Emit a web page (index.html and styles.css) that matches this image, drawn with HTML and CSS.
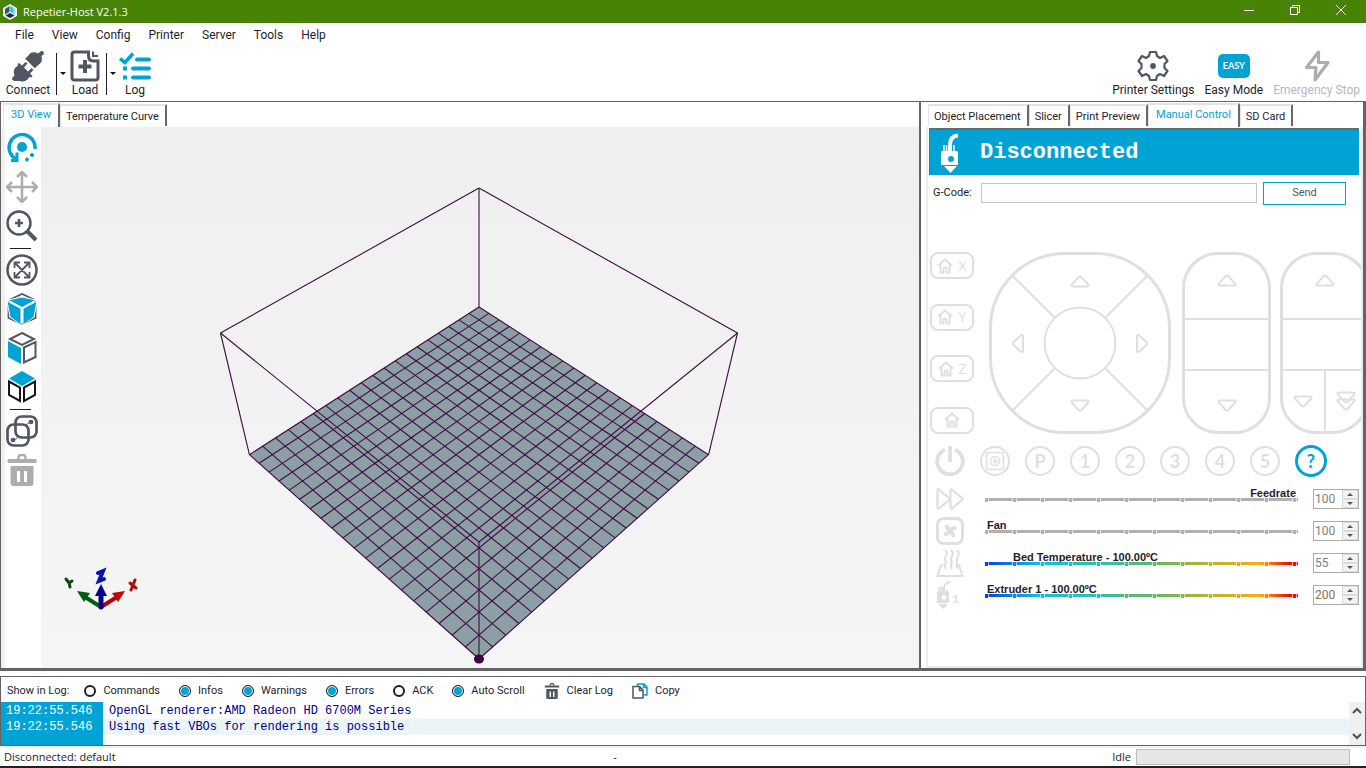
FILE: index.html
```html
<!DOCTYPE html>
<html lang="en">
<head>
  <meta charset="UTF-8" />
  <meta name="viewport" content="width=device-width, initial-scale=1.0" />
  <title>Repetier-Host V2.1.3</title>
  <link rel="stylesheet" href="styles.css">
</head>
<body>
  <!-- shared icons -->
  <svg class="defs" aria-hidden="true">
    <symbol id="home" viewBox="0 0 16 16"><path d="M1 7.500 8 1.500l7 6M3.500 6.500v8H6.500V11c0-2 3-2 3 0v3.500h3v-8" /></symbol>
    <symbol id="tri" viewBox="0 0 20 13"><path d="M8.500 2.200 1.800 9.500Q.8 11.500 2.800 11.500H17.200Q19.200 11.500 18.200 9.500L11.500 2.200Q10 .8 8.500 2.200z" /></symbol>
    <symbol id="trash" viewBox="0 0 32 32"><path d="M2.500 5h27q1 0 1 1v2q0 1-1 1h-27q-1 0-1-1V6q0-1 1-1zM4.500 12h23v17q0 3-3 3h-17q-3 0-3-3zM11 17v11h3V17zM18 17v11h3V17z" fill="currentColor" fill-rule="evenodd" /><path d="M12.500 5q0-4 2-4h3q2 0 2 4" fill="none" stroke="currentColor" stroke-width="2.500" /></symbol>
  </svg>

  <header class="titlebar">
    <svg class="app-logo" viewBox="0 0 16 16"><path d="M8 0l7 4v8l-7 4-7-4V4z" fill="#e9f1f4" /><path d="M7.500 2v6L3 10.500V5z" fill="#3a5964" /><path d="M8.500 2L13 5v5.500L8.500 8z" fill="#7fd3ea" /><path d="M8.500 2l2 1.500v5l-2-.5z" fill="#13b4df" /><path d="M8 9l4.500 2.500L8 14l-4.500-2.500z" fill="#1f2b38" /></svg>
    <h1>Repetier-Host V2.1.3</h1>
    <div class="window-buttons">
      <button aria-label="Minimize"><svg viewBox="0 0 12 12"><path d="M1 6.500h10" /></svg></button>
      <button aria-label="Restore"><svg viewBox="0 0 12 12"><path d="M1.500 3.500h7v7h-7zM3.500 3V1.500h7v7H9" /></svg></button>
      <button aria-label="Close"><svg viewBox="0 0 12 12"><path d="M1 1l10 10M11 1L1 11" /></svg></button>
    </div>
  </header>

  <nav class="menu">
    <a href="#">File</a>
    <a href="#">View</a>
    <a href="#">Config</a>
    <a href="#">Printer</a>
    <a href="#">Server</a>
    <a href="#">Tools</a>
    <a href="#">Help</a>
  </nav>

  <div class="toolbar">
    <button class="tool connect">
      <svg viewBox="0 0 32 32" fill="#515663"><path d="M29 1l2.500.5.5 2.500-2.500 2q1.500 5-2 8l-3 2.500-1.500 2-10-10 2-1.500 3-3.500q3.500-2.500 8 0z" /><path d="M2 31l-2-1.500.5-2 2-2q-2-5 1-8l2.500-2-.5-1.500 1.500-1 3 2.500 3.500-3.500 2 1.500-3.500 4 4 4 3.500-3.500 2 2-3.500 3.500 2.500 2.500-1 1.500-2-.5-2 2.500q-3 3-8 1.500z" /></svg>
      <span>Connect</span>
    </button>
    <i class="divider"></i>
    <button class="arrow" aria-label="Connect options"></button>
    <button class="tool load">
      <svg viewBox="0 0 32 32" fill="none" stroke="#515663" stroke-width="3"><path d="M19.500 2H5.500q-2.500 0-2.500 2.500v23Q3 30 5.500 30h21q2.500 0 2.500-2.500V11h-4.500q-5 0-5-5z" /><path d="M24 1.500V6h5" stroke-width="2" /><path d="M16 10v13M9.500 16.500h13" stroke-width="4" /></svg>
      <span>Load</span>
    </button>
    <i class="divider"></i>
    <button class="arrow" aria-label="Load options"></button>
    <button class="tool log">
      <svg viewBox="0 0 32 32" fill="none" stroke="#00a3d3" stroke-width="4"><path d="M1 8.500l5 4 8-9" stroke-width="3.500" /><path d="M18 9.500h12M14 18.500h16M14 27.500h16" stroke-linecap="round" /><path d="M4 18.500h4M4 27.500h4" /></svg>
      <span>Log</span>
    </button>
    <div class="toolbar-right">
      <button class="tool">
        <svg viewBox="0 0 32 32" fill="none" stroke="#515663" stroke-width="2.200" stroke-linejoin="round"><path d="M13 2h6l1 4 3 2 4-2 3.500 5-3 3v4l3 3-3.500 5-4-2-3 2-1 4h-6l-1-4-3-2-4 2-3.500-5 3-3v-4l-3-3L5 6l4 2 3-2z" /><circle cx="16" cy="16" r="1.800" fill="#515663" /></svg>
        <span>Printer Settings</span>
      </button>
      <button class="tool">
        <b class="easy">EASY</b>
        <span>Easy Mode</span>
      </button>
      <button class="tool" disabled>
        <svg viewBox="0 0 32 32" fill="none" stroke="#adadad" stroke-width="3.200" stroke-linejoin="round"><path d="M17.500 2L5.500 17.500H15L14 30 27 12.500H17.500z" /></svg>
        <span>Emergency Stop</span>
      </button>
    </div>
  </div>

  <main class="work">
    <section class="panel view-panel">
      <div class="tabs">
        <button class="tab active">3D View</button>
        <button class="tab">Temperature Curve</button>
      </div>
      <div class="view">
        <div class="view-tools">
          <button aria-label="Rotate"><svg viewBox="0 0 32 32" fill="none" stroke="#00a3d3" stroke-width="3.500"><path d="M10 27A13 13 0 1 1 29 17" /><circle cx="16" cy="15" r="5" fill="#00a3d3" stroke="none" /><path d="M5 28.500h6v-8" stroke-width="3" /><path d="M26 21v4M24 23h4M21 25.500v4M19 27.500h4" stroke-width="2" /></svg></button>
          <button aria-label="Move"><svg viewBox="0 0 32 32" fill="none" stroke="#adadad" stroke-width="2.500"><path d="M16 1v30M1 16h30M11 6l5-5 5 5M11 26l5 5 5-5M6 11l-5 5 5 5M26 11l5 5-5 5" /></svg></button>
          <button aria-label="Zoom"><svg viewBox="0 0 32 32" fill="none" stroke="#515663" stroke-width="2.500"><circle cx="13" cy="13" r="11.500" /><path d="M13 9v8M9 13h8" stroke-width="2.700" /><path d="M21.500 21.500l8.500 8.500" stroke-width="4" /></svg></button>
          <hr>
          <button aria-label="Fit printer"><svg viewBox="0 0 32 32" fill="none" stroke="#515663" stroke-width="2.500"><circle cx="16" cy="16" r="14.500" /><path d="M9 9l14 14M23 9L9 23M8.500 14V8.500H14M18 8.500h5.500V14M8.500 18v5.500H14M18 23.500h5.500V18" stroke-width="1.800" /></svg></button>
          <button aria-label="Isometric view"><svg viewBox="0 0 32 32"><path d="M3 7l13-6 13 6M2.500 8v17L16 31l13.500-6V8" fill="none" stroke="#515663" stroke-width="1.800" /><path d="M1 8l14 7.500V32L4 24zM31 8l-14 7.500V32l11-8z" fill="#00a3d3" stroke="#fff" /><path d="M2 7l14-3 14 3-14 7.500z" fill="#00a3d3" stroke="#fff" /></svg></button>
          <button aria-label="Front view"><svg viewBox="0 0 32 32"><path d="M16 1l12 6-12 6-12-6zM29.500 10v15L18 30.500v-15z" fill="none" stroke="#515663" stroke-width="2" /><path d="M2 9l13 7v16L2 25z" fill="#00a3d3" /></svg></button>
          <button aria-label="Top view"><svg viewBox="0 0 32 32"><path d="M16 0l13 7.500L16 15 3 7.500z" fill="#00a3d3" /><path d="M3 10.500l11 6V30L3 24zM29 10.500l-11 6V30l11-6z" fill="none" stroke="#151515" stroke-width="2" /></svg></button>
          <hr>
          <button aria-label="Parallel projection"><svg viewBox="0 0 32 32" fill="none" stroke="#515663" stroke-width="2.700"><rect x="9.500" y="1.500" width="21" height="21" rx="6" /><rect x="1.500" y="9.500" width="21" height="21" rx="6" /><path d="M20 10l5-4M6 27l5-4" stroke-width="1" /><circle cx="25" cy="7" r="1" /><circle cx="7" cy="25" r="1" /></svg></button>
          <button class="muted" aria-label="Delete"><svg><use href="#trash" /></svg></button>
        </div>
        <svg class="scene" viewBox="0 0 878 541">
          <g id="bed"></g>
          <g class="axes" stroke-linecap="round">
            <path d="M60 480L44 470" stroke="#075b12" stroke-width="4" /><path d="M36 464l13 2-6 9z" fill="#075b12" />
            <path d="M60 480l16-10" stroke="#b30008" stroke-width="4" /><path d="M84 464l-13 2 6 9z" fill="#c90000" />
            <path d="M60 480v-14" stroke="#04048c" stroke-width="5" /><path d="M60 457l-6 12h12z" fill="#04048c" />
            <path d="M25 452l3 4 3-2M28 455l1 5" stroke="#064b0c" stroke-width="3" fill="none" />
            <path d="M57 446l5-2-4 10 5-2" stroke="#0713b5" stroke-width="4" fill="none" />
            <path d="M94 453l-4 10M89 456l6 5" stroke="#b40c0c" stroke-width="3" fill="none" />
          </g>
        </svg>
      </div>
    </section>

    <section class="panel control-panel">
      <div class="tabs">
        <button class="tab">Object Placement</button>
        <button class="tab">Slicer</button>
        <button class="tab">Print Preview</button>
        <button class="tab active">Manual Control</button>
        <button class="tab">SD Card</button>
      </div>
      <div class="control">
        <div class="state">
          <svg viewBox="0 0 20 40"><path d="M10 18V12Q10 3 18 2.500" stroke="#fff" stroke-width="4" fill="none" /><path d="M4 12v6M6.500 12v6M14 12v6" stroke="#fff" stroke-width="1.500" /><path d="M2 18h15l1 1v13H1V19z" fill="#fff" /><path d="M4 33h13l-6.500 7z" fill="#fff" /><circle cx="11" cy="26" r="3" fill="#00a3d3" /></svg>
          <strong>Disconnected</strong>
        </div>

        <form class="gcode">
          <label for="gcode">G-Code:</label>
          <input type="text" id="gcode" />
          <button type="button">Send</button>
        </form>

        <div class="motion">
          <div class="homes">
            <button><svg><use href="#home" /></svg>X</button>
            <button><svg><use href="#home" /></svg>Y</button>
            <button><svg><use href="#home" /></svg>Z</button>
            <button aria-label="Home all"><svg><use href="#home" /></svg></button>
          </div>
          <div class="pad xy">
            <svg class="xy-lines" viewBox="0 0 182 182"><circle cx="91" cy="91" r="35.500" /><path d="M23 23l43 43M159 23l-43 43M23 159l43-43M159 159l-43-43" /></svg>
            <button class="n" aria-label="Y+"><svg><use href="#tri" /></svg></button>
            <button class="w" aria-label="X-"><svg><use href="#tri" /></svg></button>
            <button class="e" aria-label="X+"><svg><use href="#tri" /></svg></button>
            <button class="s" aria-label="Y-"><svg><use href="#tri" /></svg></button>
          </div>
          <div class="pad column">
            <button aria-label="Z+"><svg><use href="#tri" /></svg></button>
            <div class="middle"></div>
            <button class="s" aria-label="Z-"><svg><use href="#tri" /></svg></button>
          </div>
          <div class="pad column extruder">
            <button aria-label="Retract"><svg><use href="#tri" /></svg></button>
            <div class="middle"></div>
            <div class="pair">
              <button class="s" aria-label="Extrude"><svg><use href="#tri" /></svg></button>
              <button class="s double" aria-label="Extrude fast"><svg><use href="#tri" /></svg><svg><use href="#tri" /></svg></button>
            </div>
          </div>
        </div>

        <div class="rounds">
          <button class="power" aria-label="Power"><svg viewBox="0 0 32 32" fill="none" stroke="#dfdfdf" stroke-width="4"><path d="M10.500 4A13.700 13.700 0 1 0 21.500 4M16 0v17" /></svg></button>
          <button aria-label="Motor off"><svg viewBox="0 0 20 20" fill="none" stroke="#dfdfdf" stroke-width="1.500"><rect x="1.500" y="1.500" width="17" height="17" rx="2" /><circle cx="10" cy="10" r="4.500" /><circle cx="10" cy="10" r="1.500" /></svg></button>
          <button>P</button>
          <button>1</button>
          <button>2</button>
          <button>3</button>
          <button>4</button>
          <button>5</button>
          <button class="help">?</button>
        </div>

        <div class="sliders">
          <div class="slider-row">
            <svg viewBox="0 0 28 28" fill="none" stroke="#dfdfdf" stroke-width="2.200" stroke-linejoin="round"><path d="M1.500 5.500v17q0 2 2 .5L13 15q1.500-1 0-2L3.500 5q-2-1.500-2 .5zM14.500 5.500v17q0 2 2 .5L26 15q1.500-1 0-2l-9.500-8q-2-1.500-2 .5z" /></svg>
            <div class="slider"><label class="end" for="feed">Feedrate</label><input type="range" id="feed" /></div>
            <div class="spin"><input type="number" value="100" aria-label="Feedrate value" /><div><button aria-label="Up"></button><button class="down" aria-label="Down"></button></div></div>
          </div>
          <div class="slider-row">
            <svg viewBox="0 0 28 28" fill="none" stroke="#dfdfdf"><rect x="1.500" y="1.500" width="25" height="25" rx="6" stroke-width="3" /><path d="M11 9.500q0 3 3 4.500M18.500 11q-3 0-4.500 3M17 18.500q0-3-3-4.500M9.500 17q3 0 4.500-3" stroke-width="4" stroke-linecap="round" /></svg>
            <div class="slider"><label for="fan">Fan</label><input type="range" id="fan" /></div>
            <div class="spin"><input type="number" value="100" aria-label="Fan value" /><div><button aria-label="Up"></button><button class="down" aria-label="Down"></button></div></div>
          </div>
          <div class="slider-row">
            <svg viewBox="0 0 28 28" fill="none" stroke="#dfdfdf" stroke-width="2"><path d="M7 16H5L1.500 27h25L23 16h-2M9 1q3 3 1 6t0 6q-2 3 0 7M15 1q3 3 1 6t0 6q-2 3 0 7M21 1q3 3 1 6t-1 6q-1 3 1 7" /></svg>
            <div class="slider heat"><label class="indent" for="bed-temp">Bed Temperature - 100.00ºC</label><input type="range" id="bed-temp" /></div>
            <div class="spin"><input type="number" value="55" aria-label="Bed temperature value" /><div><button aria-label="Up"></button><button class="down" aria-label="Down"></button></div></div>
          </div>
          <div class="slider-row">
            <svg viewBox="0 0 28 28"><path d="M8 11V8q0-6 6-7M3.500 6v6M6 6v6M11 9v3" stroke="#dfdfdf" stroke-width="2" fill="none" /><path d="M1 11h12v11H1zM2 23h10l-5 5z" fill="#dfdfdf" /><circle cx="8" cy="16.500" r="2.300" fill="#fff" /><text x="16" y="22">1</text></svg>
            <div class="slider heat"><label for="ext">Extruder 1 - 100.00ºC</label><input type="range" id="ext" /></div>
            <div class="spin warm"><input type="number" value="200" aria-label="Extruder value" /><div><button aria-label="Up"></button><button class="down" aria-label="Down"></button></div></div>
          </div>
        </div>
      </div>
    </section>
  </main>

  <section class="log-panel">
    <div class="filters">
      <span class="caption">Show in Log:</span>
      <label><input type="checkbox" />Commands</label>
      <label><input type="checkbox" checked />Infos</label>
      <label><input type="checkbox" checked />Warnings</label>
      <label><input type="checkbox" checked />Errors</label>
      <label><input type="checkbox" />ACK</label>
      <label><input type="checkbox" checked />Auto Scroll</label>
      <button><svg><use href="#trash" /></svg>Clear Log</button>
      <button><svg viewBox="0 0 16 16" fill="none" stroke-width="1.500"><path d="M5.500 3V1H12l3 3v8h-3M11.500 1v3.500H15" stroke="#00a3d3" /><path d="M1 3.500h6.500L11 7v8H1zM7.500 4v3.500H11" stroke="#515663" /></svg>Copy</button>
    </div>
    <div class="log-body">
      <ul class="lines">
        <li><time>19:22:55.546</time><span>OpenGL renderer:AMD Radeon HD 6700M Series</span></li>
        <li><time>19:22:55.546</time><span>Using fast VBOs for rendering is possible</span></li>
      </ul>
      <div class="scroll">
        <button aria-label="Scroll up"><svg viewBox="0 0 10 8"><path d="M1 6l4-4 4 4" /></svg></button>
        <button aria-label="Scroll down"><svg viewBox="0 0 10 8"><path d="M1 2l4 4 4-4" /></svg></button>
      </div>
    </div>
  </section>

  <footer class="status">
    <span class="left">Disconnected: default</span>
    <span class="mid">-</span>
    <span class="right">Idle</span>
    <div class="progress"></div>
  </footer>

  <script src="script.js"></script>
</body>
</html>
```
FILE: styles.css
```css
* {
  box-sizing: border-box;
}
body {
  margin: 0;
  height: 100vh;
  display: flex;
  flex-direction: column;
  background: #fff;
  color: #1e1e28;
  font: 12px/16px Roboto, sans-serif;
  overflow: hidden;
}
button {
  border: 0;
  padding: 0;
  background: none;
  color: inherit;
  font: inherit;
}
svg {
  display: block;
}
.defs {
  position: absolute;
  width: 0;
  height: 0;
}

/* title bar and menu */
.titlebar {
  display: flex;
  align-items: center;
  height: 23px;
  padding: 0 2px;
  background: #488305;
  color: #fff;
}
.app-logo {
  width: 16px;
  height: 16px;
}
.titlebar h1 {
  flex: 1;
  margin: 0 0 0 5px;
  font: 11px/16px "Open Sans", sans-serif;
}
.window-buttons {
  display: flex;
  align-self: flex-start;
  height: 20px;
}
.window-buttons button {
  width: 46px;
  display: flex;
  align-items: center;
  justify-content: center;
}
.window-buttons svg {
  width: 12px;
  height: 12px;
  fill: none;
  stroke: #fff;
}
.menu {
  display: flex;
  align-items: center;
  gap: 18px;
  height: 24px;
  padding-left: 15px;
}
.menu a {
  color: inherit;
  text-decoration: none;
}

/* toolbar */
.toolbar {
  display: flex;
  height: 54px;
  padding: 3px 6px 0 5px;
}
.tool {
  display: flex;
  flex-direction: column;
  align-items: center;
  height: 48px;
}
.tool svg {
  width: 32px;
  height: 32px;
}
.tool:disabled {
  color: #b4b7c0;
}
.connect {
  width: 46px;
}
.load, .log {
  width: 32px;
}
.divider {
  width: 1px;
  height: 42px;
  margin: 3px 0 0 5px;
  background: #1e1e28;
}
.arrow {
  width: 12px;
  display: flex;
  justify-content: center;
  padding-top: 22px;
}
.arrow::before {
  content: "";
  border: 3px solid transparent;
  border-top-color: #111;
}
.toolbar-right {
  display: flex;
  gap: 10px;
  margin-left: auto;
}
.easy {
  width: 32px;
  height: 24px;
  margin: 4px 0;
  border-radius: 5px;
  background: #00a3d3;
  color: #fff;
  font: bold 9px/24px Lato, sans-serif;
}

/* panels and tabs */
.work {
  flex: 1;
  min-height: 0;
  display: flex;
  border-top: 1px solid #646464;
}
.panel {
  display: flex;
  flex-direction: column;
  min-width: 0;
}
.view-panel {
  flex: 1;
  border: solid #646464;
  border-width: 0 2px 3px 1px;
}
.control-panel {
  width: 445px;
  padding-left: 5px;
  border: solid #646464;
  border-width: 0 3px 3px 0;
}
.tabs {
  display: flex;
  align-items: flex-end;
  height: 25px;
  padding-left: 2px;
}
.tab {
  height: 22px;
  padding: 1px 6px 0 5px;
  border: solid #e3e3e3;
  border-width: 2px 2px 0 1px;
  border-right-color: #696969;
  font-size: 11px;
  line-height: 20px;
  white-space: nowrap;
  margin-bottom: 1px;
}
.tab.active {
  height: 24px;
  padding: 1px 7px 3px;
  line-height: 18px;
  color: #00a3d3;
  margin-bottom: 0;
}

/* 3D view */
.view {
  flex: 1;
  min-height: 0;
  display: flex;
  border-left: 4px solid #f0f0f0;
}
.view-tools {
  width: 36px;
  padding: 5px 0 0 1px;
}
.view-tools button {
  display: block;
  width: 32px;
  height: 32px;
  margin-bottom: 7px;
}
.view-tools svg {
  width: 32px;
  height: 32px;
}
.view-tools hr {
  width: 21px;
  margin: -1px 0 5px 4px;
  border: 0;
  border-top: 1px solid #1e1e28;
}
.muted {
  color: #adadad;
}
.scene {
  flex: 1;
  min-width: 0;
  height: 100%;
  background: linear-gradient(#efefef, #f5f5f5);
}
.plate {
  fill: #8c9fa4;
}
.wire {
  fill: none;
  stroke: #400a45;
  stroke-width: 1.1;
}
.origin {
  fill: #400040;
}

/* manual control */
.control {
  flex: 1;
  padding: 1px 2px 0 1px;
  border: solid #ececec;
  border-width: 0 2px 2px;
  overflow: hidden;
}
.state {
  display: flex;
  align-items: center;
  height: 47px;
  padding-left: 10px;
  border: solid #696969;
  border-width: 2px 0 0 1px;
  background: #00a3d3;
  color: #fff;
}
.state svg {
  width: 20px;
  height: 40px;
}
.state strong {
  margin-left: 20px;
  font: bold 22px/24px "Liberation Mono", monospace;
}
.gcode {
  display: flex;
  align-items: center;
  height: 24px;
  margin: 6px 13px 47px 4px;
  font-size: 11px;
}
.gcode label {
  width: 48px;
}
.gcode input {
  flex: 1;
  min-width: 0;
  height: 20px;
  border: 1px solid #c6c6c6;
}
.gcode button {
  width: 83px;
  height: 23px;
  margin-left: 6px;
  border: 1px solid #00a3d3;
  color: #515663;
}
.motion {
  display: flex;
  height: 182px;
  margin: 0 -2px 0 1px;
  overflow: hidden;
  color: #dfdfdf;
}
.motion svg {
  flex: none;
  fill: none;
  stroke: #dfdfdf;
  stroke-width: 2;
}
.homes {
  display: flex;
  flex-direction: column;
  justify-content: space-between;
  margin-right: 15px;
}
.homes button {
  display: flex;
  align-items: center;
  justify-content: center;
  gap: 5px;
  width: 44px;
  height: 27px;
  border: 2px solid #dfdfdf;
  border-radius: 8px;
  font: 13px/16px Lato, sans-serif;
}
.homes svg {
  width: 16px;
  height: 16px;
}
.pad {
  position: relative;
  flex: none;
  border: 3px solid #dfdfdf;
  margin-right: 11px;
}
.pad button svg {
  width: 20px;
  height: 13px;
}
.pad button {
  display: flex;
  align-items: center;
  justify-content: center;
}
.pad .s svg {
  transform: rotate(180deg);
}
.pad .e svg {
  transform: rotate(90deg);
}
.pad .w svg {
  transform: rotate(-90deg);
}
.xy {
  display: grid;
  grid-template: 52px 1fr 52px / 52px 1fr 52px;
  width: 182px;
  border-radius: 76px;
}
.xy-lines {
  position: absolute;
  inset: -3px;
}
.xy .n, .xy .s {
  grid-column: 2;
}
.xy .n {
  grid-row: 1;
}
.xy .w, .xy .e {
  grid-row: 2;
}
.xy .e {
  grid-column: 3;
}
.xy .s {
  grid-row: 3;
}
.column {
  display: flex;
  flex-direction: column;
  width: 89px;
  border-radius: 36px;
  margin-right: 9px;
}
.column > button {
  height: 63px;
  padding-bottom: 12px;
}
.column > .s {
  flex: 1;
  padding: 8px 0 0;
}
.column .middle {
  height: 53px;
  border: solid #dfdfdf;
  border-width: 2px 0;
}
.extruder .pair {
  flex: 1;
  display: flex;
}
.pair button {
  flex: 1;
}
.pair button + button {
  flex-direction: column;
  border-left: 2px solid #dfdfdf;
}
.double svg + svg {
  margin-top: -6px;
}

/* round buttons */
.rounds {
  display: flex;
  gap: 15px;
  height: 32px;
  margin: 11px 0 0 6px;
  align-items: center;
}
.rounds button {
  width: 30px;
  height: 30px;
  border: 2px solid #dfdfdf;
  border-radius: 50%;
  color: #dfdfdf;
  font: bold 18px/26px Lato, sans-serif;
}
.rounds svg {
  width: 20px;
  height: 20px;
  margin: 0 auto;
}
.rounds .power {
  border: 0;
}
.rounds .power svg {
  width: 30px;
  height: 30px;
}
.rounds .help {
  width: 32px;
  height: 32px;
  border: 3px solid #00a3d3;
  color: #00a3d3;
}

/* sliders */
.sliders {
  margin: 6px 0 0 7px;
}
.slider-row {
  display: flex;
  align-items: center;
  height: 32px;
}
.slider-row > svg {
  width: 28px;
  height: 28px;
}
.slider-row text {
  fill: #dfdfdf;
  font: bold 12px Lato, sans-serif;
}
.slider {
  flex: 1;
  display: flex;
  flex-direction: column;
  height: 24px;
  margin: 0 15px 0 21px;
}
.slider label {
  margin: 0 2px;
  font: bold 11px/12px "Liberation Sans", sans-serif;
}
.slider .end {
  align-self: flex-end;
}
.slider .indent {
  margin-left: 28px;
}
.slider input {
  appearance: none;
  width: 100%;
  height: 4px;
  margin: -1px 0 0;
  background: #adb0b5;
  -webkit-mask-image: repeating-linear-gradient(90deg, #000 0 3px, transparent 3px 28px), repeating-linear-gradient(90deg, rgba(0,0,0,0.4) 0 4px, #000 4px 27px, rgba(0,0,0,0.4) 27px 28px);
  -webkit-mask-size: 100% 100%, 100% 3px;
  -webkit-mask-repeat: no-repeat;
}
.slider input::-webkit-slider-thumb {
  appearance: none;
  width: 1px;
  height: 1px;
}
.slider.heat input {
  background: linear-gradient(90deg, #0b3fe5, #0fbdea 17%, #35bda0 38%, #72b752 58%, #b5b53a 72%, #fca816 88%, #fb0d04 97%);
}
.spin {
  display: flex;
  width: 46px;
  height: 20px;
  border: 1px solid #a9acb1;
}
.spin input {
  flex: 1;
  min-width: 0;
  padding: 0 0 1px 1px;
  border: 0;
  appearance: textfield;
  background: none;
  color: #7c7f86;
  font: 12px/16px Roboto, sans-serif;
}
.spin.warm input {
  color: #8a6c55;
}
.spin input::-webkit-inner-spin-button {
  display: none;
}
.spin div {
  display: flex;
  flex-direction: column;
  width: 16px;
}
.spin button {
  flex: 1;
  display: flex;
  align-items: center;
  justify-content: center;
  border: 1px solid #dcdcdc;
  background: #f3f3f3;
}
.spin button::before {
  content: "";
  border: solid transparent;
  border-width: 0 3px 3px;
  border-bottom-color: #555;
}
.spin .down::before {
  transform: rotate(180deg);
}

/* log */
.log-panel {
  margin-top: 5px;
  border: 1px solid #646464;
}
.filters {
  display: flex;
  align-items: center;
  height: 25px;
  padding: 2px 0 0 6px;
  font-size: 11px;
}
.caption {
  margin-right: 15px;
}
.filters label, .filters button {
  display: flex;
  align-items: center;
  margin-right: 19px;
}
.filters input {
  appearance: none;
  width: 12px;
  height: 12px;
  margin: 0 7px 0 0;
  border: 2px solid #1e1e28;
  border-radius: 50%;
}
.filters input:checked {
  border-width: 1px;
  background: #00a3d3;
  box-shadow: inset 0 0 0 1px #fff;
}
.filters svg {
  width: 16px;
  height: 16px;
  margin-right: 7px;
  color: #515663;
}
.log-body {
  display: flex;
  height: 43px;
}
.lines {
  flex: 1;
  margin: 0;
  padding: 1px 0 0;
  list-style: none;
  background: linear-gradient(90deg, #00a3d3 102px, #fff 102px);
  font: 12px/16px "Liberation Mono", monospace;
}
.lines li {
  display: flex;
}
.lines time {
  width: 102px;
  padding-left: 5px;
  color: #fff;
}
.lines span {
  flex: 1;
  padding-left: 6px;
  color: #00008b;
}
.lines li:nth-child(even) span {
  background: #ebf4f7;
}
.scroll {
  display: flex;
  flex-direction: column;
  justify-content: space-between;
  width: 16px;
  padding: 5px 3px;
  background: #f0f0f0;
}
.scroll svg {
  width: 10px;
  height: 8px;
  fill: none;
  stroke: #505050;
  stroke-width: 2;
}

/* status bar */
.status {
  display: flex;
  align-items: center;
  height: 22px;
  padding: 0 16px 0 4px;
  border-top: 2px solid #f0f0f0;
  border-bottom: 2px solid #222;
  font: 11px/16px "Open Sans", sans-serif;
}
.status .left {
  flex: 609;
}
.status .mid {
  flex: 499;
}
.progress {
  width: 214px;
  height: 16px;
  margin-left: 5px;
  border: 1px solid #bcbcbc;
  background: #e6e6e6;
}
```
FILE: script.js
```js
const bed = document.getElementById("bed");
const cells = 20;

function add(tag, attrs) {
  const el = document.createElementNS("http://www.w3.org/2000/svg", tag);
  for (const key in attrs) el.setAttribute(key, attrs[key]);
  bed.appendChild(el);
}

// bed position (0..1) to a point in the scene, seen in perspective
function project(u, v) {
  const w = 1 + 0.1916 * (u + v);
  const x = 438 + 273.6 * (u - v) / w;
  const y = (659 - 117.2 * (u + v)) / w - 127;
  return x.toFixed(1) + "," + y.toFixed(1);
}

function line(a, b) {
  add("path", { class: "wire", d: "M" + a + "L" + b });
}

add("polygon", {
  class: "plate",
  points: [project(0, 0), project(1, 0), project(1, 1), project(0, 1)].join(" ")
});

for (let i = 0; i <= cells; i++) {
  const t = i / cells;
  line(project(t, 0), project(t, 1));
  line(project(0, t), project(1, t));
}

// frame of the print volume
const top4 = ["438,415", "696.500,206", "438,61", "179.500,206"];
const base = [project(0, 0), project(1, 0), project(1, 1), project(0, 1)];
for (let i = 0; i < 4; i++) {
  line(top4[i], top4[(i + 1) % 4]);
  line(top4[i], base[i]);
}

add("ellipse", { class: "origin", cx: 438, cy: 532, rx: 5, ry: 4.5 });
```
